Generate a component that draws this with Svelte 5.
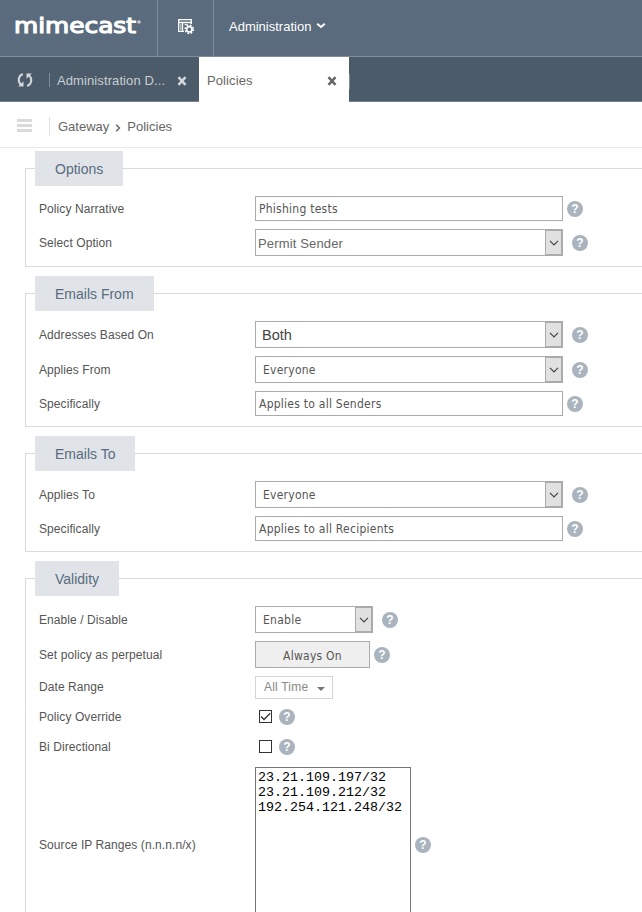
<script>
  const sections = [
    {
      title: "Options",
      rows: [
        { label: "Policy Narrative", type: "text", value: "Phishing tests" },
        { label: "Select Option", type: "select", value: "Permit Sender", look: "plain" },
      ],
    },
    {
      title: "Emails From",
      rows: [
        { label: "Addresses Based On", type: "select", value: "Both", look: "large" },
        { label: "Applies From", type: "select", value: "Everyone" },
        { label: "Specifically", type: "text", value: "Applies to all Senders" },
      ],
    },
    {
      title: "Emails To",
      rows: [
        { label: "Applies To", type: "select", value: "Everyone" },
        { label: "Specifically", type: "text", value: "Applies to all Recipients" },
      ],
    },
    {
      title: "Validity",
      rows: [
        { label: "Enable / Disable", type: "select", value: "Enable", look: "short" },
        { label: "Set policy as perpetual", type: "button", value: "Always On" },
        { label: "Date Range", type: "range", value: "All Time" },
        { label: "Policy Override", type: "checkbox", value: true },
        { label: "Bi Directional", type: "checkbox", value: false },
        {
          label: "Source IP Ranges (n.n.n.n/x)",
          type: "textarea",
          value: "23.21.109.197/32\n23.21.109.212/32\n192.254.121.248/32",
        },
      ],
    },
  ];
</script>

{#snippet cross()}
  <svg class="cross" width="10" height="10" viewBox="0 0 10 10">
    <path d="M1.5 1.2 8.5 8.8M8.5 1.2 1.5 8.8" />
  </svg>
{/snippet}

<div class="page">
  <header>
    <div class="logo">
      <svg width="132" height="30" viewBox="0 0 132 30">
        <text class="word" x="0" y="22" textLength="122" lengthAdjust="spacingAndGlyphs">mimecast</text>
        <circle cx="125" cy="11" r="1.8" />
      </svg>
    </div>
    <div class="apps">
      <svg width="18" height="17" viewBox="0 0 18 17">
        <path class="frame" d="M14.3 6V1.7H1.7v11.6H7M1.7 4.5h12.6M5.5 4.5v8.8" />
        <path class="frame thin" d="M3 7h1.5M3 9h1.5M3 11h1.5M7.5 6.7h3" />
        <circle class="teeth" cx="12.3" cy="11.3" r="4" />
        <circle class="gear" cx="12.3" cy="11.3" r="2.7" />
      </svg>
    </div>
    <div class="menu">
      <span>Administration</span>
      <svg width="10" height="8" viewBox="0 0 10 8"><path d="M1.2 1.7 5 5 8.8 1.7" /></svg>
    </div>
  </header>

  <nav>
    <div class="refresh">
      <svg width="16" height="16" viewBox="0 0 16 16">
        <path class="arc" d="M6 2.4H4.8C0.7 5 0.8 10.4 4.5 13M10 13.6h1.2C15.3 11 15.2 5.6 11.5 3" />
        <path class="head" d="M1.2 14.6h5.3V9.3zM14.8 1.4H9.5v5.3z" />
      </svg>
    </div>
    <div class="tab">
      <span>Administration D...</span>
      {@render cross()}
    </div>
    <div class="tab active">
      <span>Policies</span>
      {@render cross()}
    </div>
    <div class="end"></div>
  </nav>

  <div class="crumbs">
    <div class="burger"><i></i><i></i><i></i></div>
    <div class="path">
      <span>Gateway</span>
      <svg width="6" height="8" viewBox="0 0 6 8"><path d="M1.2 0.8 4.4 4 1.2 7.2" /></svg>
      <span>Policies</span>
    </div>
  </div>

  <main>
    {#each sections as section}
      <fieldset>
        <legend>{section.title}</legend>
        <div class="rows">
          {#each section.rows as row}
            <div class="row {row.type}">
              <div class="label">{row.label}</div>
              {#if row.type === "text"}
                <input type="text" value={row.value} />
              {:else if row.type === "select"}
                <div class="dropdown {row.look}">
                  <span>{row.value}</span>
                  <div class="arrow">
                    <svg width="10" height="6" viewBox="0 0 10 6"><path d="M1 0.8 5 4.8 9 0.8" /></svg>
                  </div>
                </div>
              {:else if row.type === "button"}
                <button>{row.value}</button>
              {:else if row.type === "range"}
                <div class="date">
                  <span>{row.value}</span>
                  <i></i>
                </div>
              {:else if row.type === "checkbox"}
                <div class="check">
                  {#if row.value}
                    <svg width="11" height="11" viewBox="0 0 11 11"><path d="M1 5.5 4 8.5 10.2 2.3" /></svg>
                  {/if}
                </div>
              {:else}
                <textarea value={row.value} spellcheck="false"></textarea>
              {/if}
              {#if row.type !== "range"}
                <div class="help">?</div>
              {/if}
            </div>
          {/each}
        </div>
      </fieldset>
    {/each}
  </main>
</div>

<style>
  :global(body) {
    overflow: hidden;
  }
  .page {
    height: 912px;
    overflow: hidden;
    background: #fff;
    font-family: "Liberation Sans", Arial, sans-serif;
    font-size: 13px;
    color: #555;
  }
  .page * {
    box-sizing: border-box;
  }
  svg {
    display: block;
    fill: none;
    flex-shrink: 0;
  }
  header {
    display: flex;
    height: 57px;
    background: #596b7c;
    border-bottom: 1px solid #7e8d98;
    color: #fff;
  }
  .logo {
    width: 158px;
    padding: 11px 0 0 14px;
    border-right: 1px solid #7e8d98;
  }
  .word {
    font: 22px "DejaVu Sans", sans-serif;
    fill: #fff;
    stroke: #fff;
    stroke-width: 1.2;
  }
  .logo circle {
    fill: #c3cad0;
  }
  .apps {
    width: 56px;
    padding: 18px 0 0 19px;
    border-right: 1px solid #7e8d98;
  }
  .frame {
    stroke: #fff;
    stroke-width: 1.3;
  }
  .thin {
    stroke-width: 1;
  }
  .teeth {
    stroke: #fff;
    stroke-width: 1.8;
    stroke-dasharray: 1.7 1.44;
  }
  .gear {
    stroke: #fff;
    stroke-width: 1.7;
  }
  .menu {
    display: flex;
    padding: 19px 0 0 15px;
    gap: 5px;
    line-height: 15px;
  }
  .menu svg {
    margin-top: 3px;
    stroke: #fff;
    stroke-width: 2;
  }
  nav {
    display: flex;
    height: 45px;
    background: linear-gradient(#4b5b69 44px, #75838e 44px);
    color: #c8ced3;
  }
  .refresh {
    width: 49px;
    padding: 15px 0 0 17px;
  }
  .arc {
    stroke: #d3d8dc;
    stroke-width: 2;
  }
  .head {
    fill: #d3d8dc;
  }
  .tab {
    display: flex;
    justify-content: space-between;
    align-items: center;
    width: 150px;
    padding: 1px 12px 0 8px;
    letter-spacing: 0.1px;
  }
  .tab:before {
    content: "";
    width: 1px;
    height: 14px;
    margin: 0 7px 0 -8px;
    background: #7e8d98;
  }
  .tab span {
    flex: 1;
  }
  .tab.active {
    background: #fff;
    color: #666;
  }
  .tab.active:before {
    background: none;
  }
  .cross {
    stroke: #d3d8dc;
    stroke-width: 2.5;
    margin-top: 2px;
  }
  .active .cross {
    stroke: #666;
  }
  .end {
    width: 1px;
    height: 15px;
    margin-top: 17px;
    background: #7e8d98;
  }
  .crumbs {
    display: flex;
    align-items: center;
    height: 46px;
    padding: 3px 0 0 17px;
    border-bottom: 1px solid #ebebeb;
    color: #666;
  }
  .burger {
    display: flex;
    flex-direction: column;
    gap: 2px;
    width: 32px;
    margin-top: -1px;
  }
  .burger i {
    width: 15px;
    height: 3px;
    background: #dadada;
  }
  .path {
    display: flex;
    align-items: center;
    gap: 6px;
    height: 19px;
    padding-left: 8px;
    border-left: 1px solid #e3e3e3;
  }
  .path svg {
    margin-top: 3px;
    stroke: #666;
    stroke-width: 1.5;
  }
  main {
    padding: 3px 0 0 25px;
  }
  fieldset {
    margin: 0 0 9px;
    padding: 0;
    min-width: 0;
    border: 1px solid #d9dadb;
    border-right: none;
  }
  legend {
    height: 35px;
    margin-left: 9px;
    padding: 0 20px;
    background: #e0e4e9;
    color: #596b7c;
    font-size: 14px;
    line-height: 36px;
  }
  .rows {
    display: flex;
    flex-direction: column;
    gap: 8px;
    padding: 10px 0 10px 13px;
  }
  .row {
    display: flex;
    align-items: center;
  }
  .label {
    width: 216px;
    font-size: 12px;
    letter-spacing: 0.08px;
  }
  input,
  .dropdown,
  button {
    margin: 0;
    border: 1px solid #ababab;
    background: #fff;
    color: #555;
    font-family: "DejaVu Sans Condensed", "DejaVu Sans", sans-serif;
    font-stretch: condensed;
    font-size: 12px;
    letter-spacing: 0.25px;
  }
  input {
    width: 308px;
    height: 25px;
    padding: 1px 3px 0;
    border-radius: 0;
  }
  .dropdown {
    display: flex;
    justify-content: space-between;
    align-items: center;
    width: 308px;
    height: 27px;
    padding-left: 7px;
  }
  .dropdown span {
    padding-top: 1px;
  }
  .dropdown.plain {
    padding-left: 2px;
    font: 13px "Liberation Sans", Arial, sans-serif;
    letter-spacing: 0.15px;
    color: #666;
  }
  .dropdown.large {
    padding-left: 6px;
    font: 14.5px "Liberation Sans", Arial, sans-serif;
    letter-spacing: 0;
    color: #444;
  }
  .large span {
    padding-top: 0;
  }
  .dropdown.short {
    width: 118px;
  }
  .arrow {
    display: flex;
    align-items: center;
    justify-content: center;
    width: 17px;
    height: 25px;
    border: 1px solid #ababab;
    background: #e1e1e1;
  }
  .arrow svg {
    stroke: #444;
    stroke-width: 1.2;
  }
  button {
    width: 115px;
    height: 27px;
    padding: 2px 0 0;
    background: #efefef;
  }
  .range .label {
    margin-top: -2px;
  }
  .date {
    display: flex;
    width: 78px;
    height: 23px;
    padding-left: 8px;
    border: 1px solid #d5d5d5;
    color: #888;
    font-size: 12px;
    line-height: 20px;
    letter-spacing: 0.2px;
  }
  .date i {
    width: 0;
    height: 0;
    margin: 10px 0 0 9px;
    border: 4px solid transparent;
    border-top-color: #777;
    border-bottom: none;
  }
  .checkbox {
    height: 20px;
    margin-bottom: 2px;
  }
  .check {
    width: 13px;
    height: 13px;
    margin: -1px 3px 0 4px;
    border: 1px solid #333;
  }
  .check svg {
    stroke: #333;
    stroke-width: 1.3;
  }
  textarea {
    width: 156px;
    height: 156px;
    margin: 0;
    padding: 2px;
    border: 1px solid #767676;
    border-radius: 0;
    resize: none;
    overflow: hidden;
    color: #000;
    font: 13.333px/15px "Liberation Mono", "Courier New", monospace;
  }
  .help {
    width: 16px;
    height: 16px;
    margin: 1px 0 0 4px;
    border-radius: 50%;
    background: #aab4be;
    color: #fff;
    font-size: 12px;
    font-weight: bold;
    line-height: 16px;
    text-align: center;
  }
  .select .help {
    margin-left: 9px;
  }
  .checkbox .help,
  .textarea .help {
    margin-top: 0;
  }
</style>
